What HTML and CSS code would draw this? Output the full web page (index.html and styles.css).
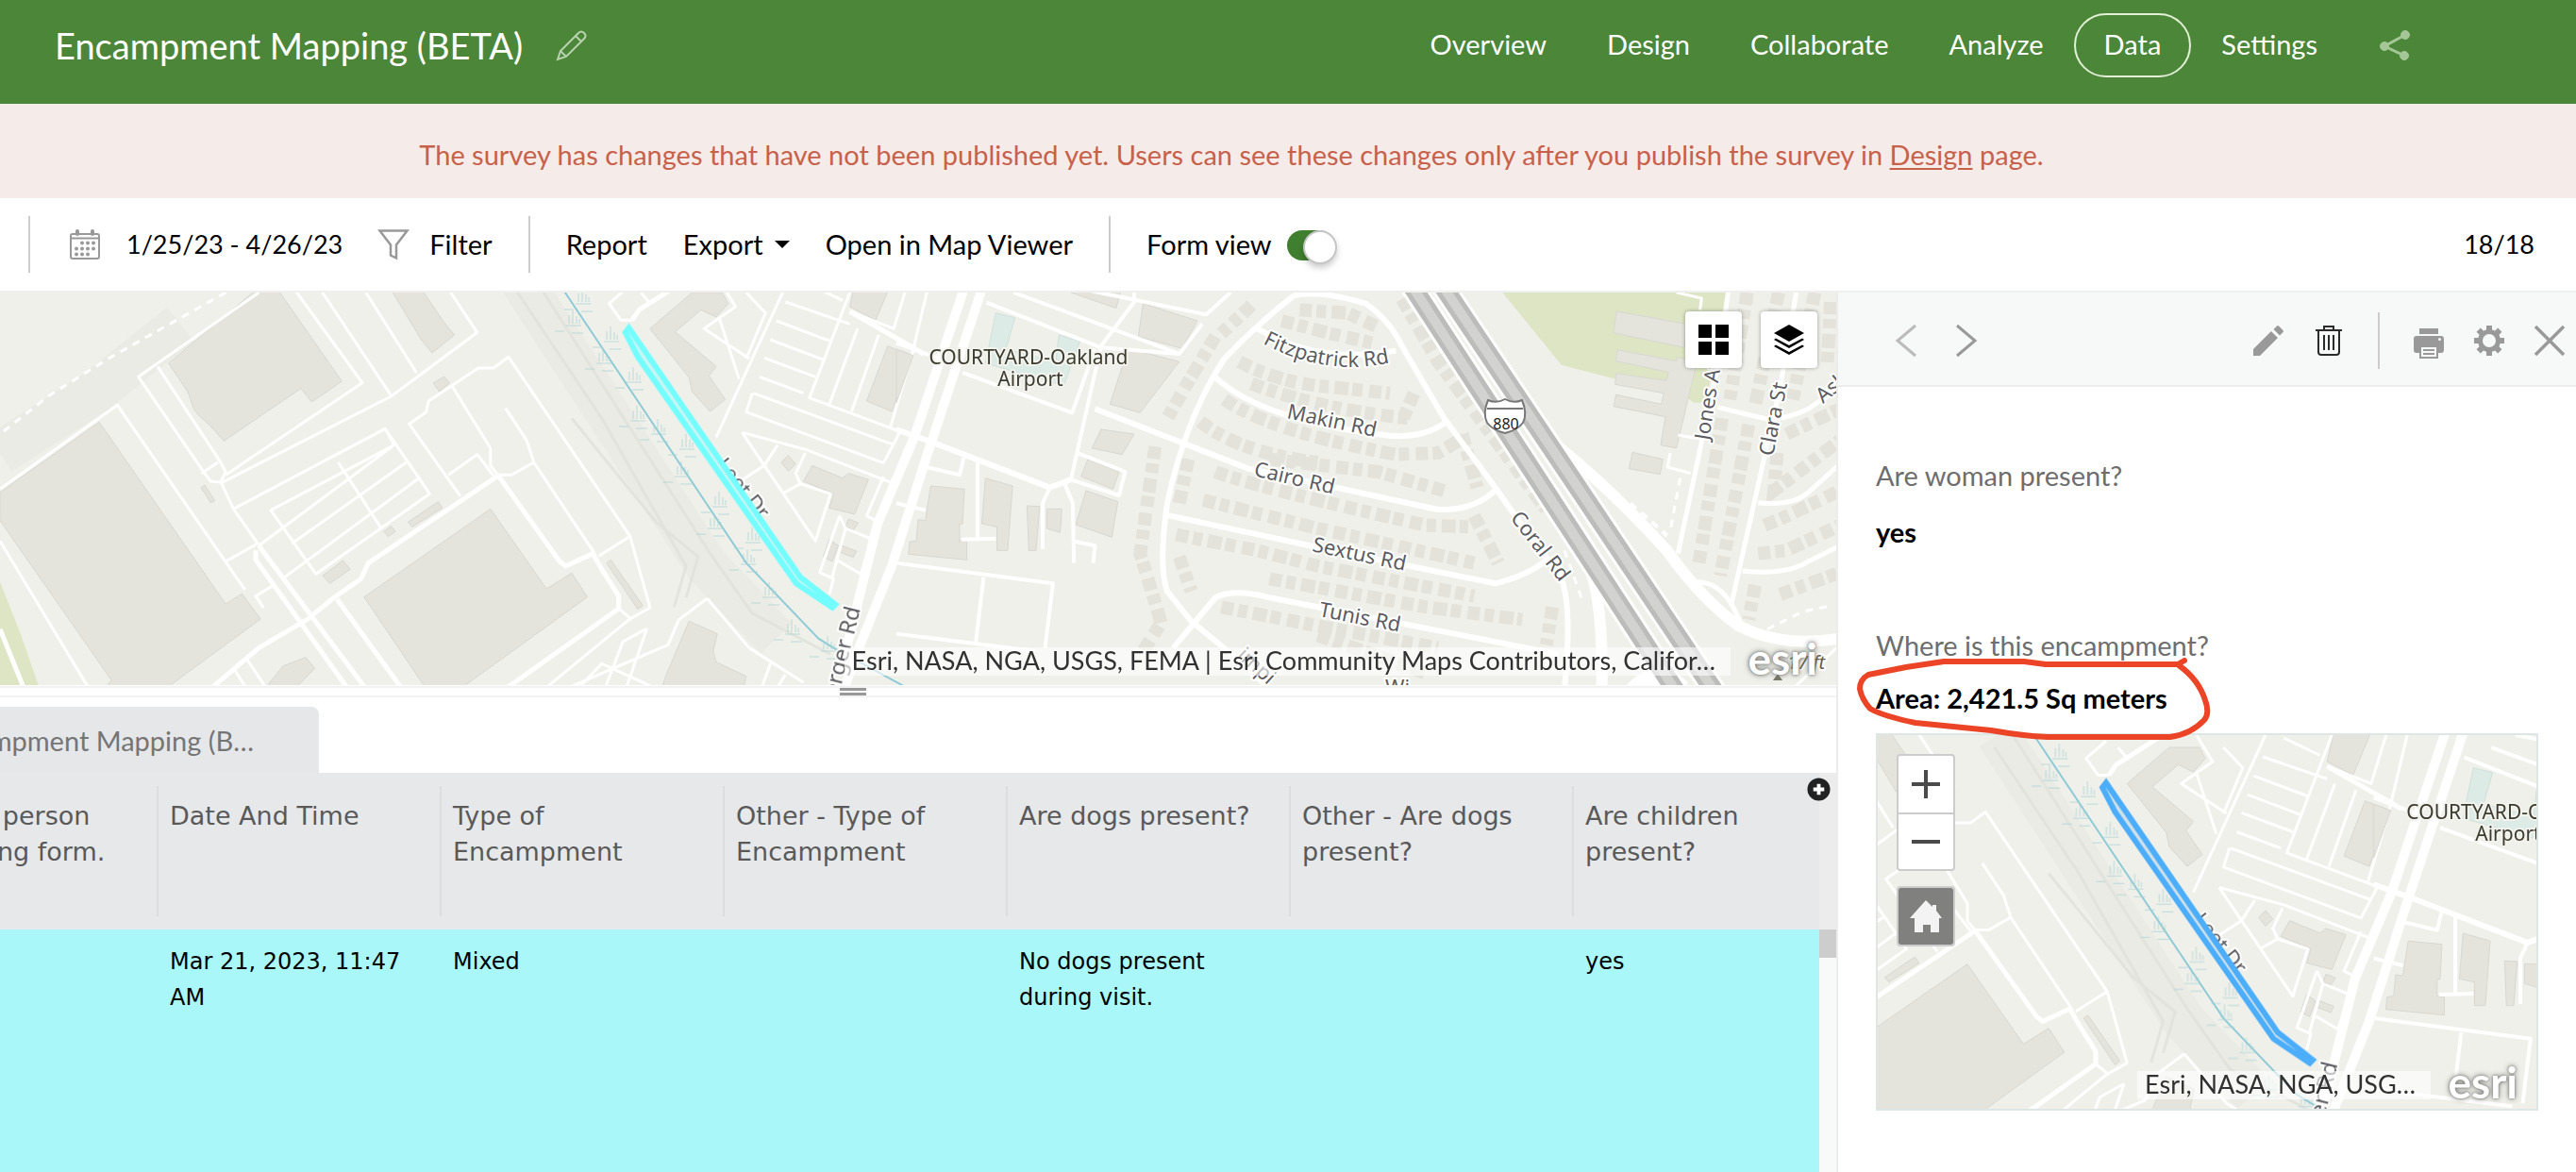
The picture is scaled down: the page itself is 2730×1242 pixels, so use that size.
FILE: index.html
```html
<!DOCTYPE html>
<html lang="en">
<head>
<meta charset="utf-8">
<title>Encampment Mapping (BETA)</title>
<link rel="stylesheet" href="styles.css">
</head>
<body>
<div class="app">
  <header class="header">
    <h1 class="title">Encampment Mapping (BETA)</h1>
    <button class="icon-btn" aria-label="Rename survey">
      <svg class="icon" viewBox="0 0 32 32" fill="none" stroke="#b9d3ae" stroke-width="2"><path d="M1 31l3-9L23 3q3-3 6 0t0 6L10 28zM4 22l6 6M20 6l6 6"/></svg>
    </button>
    <nav class="nav">
      <a href="#">Overview</a>
      <a href="#">Design</a>
      <a href="#">Collaborate</a>
      <a href="#">Analyze</a>
      <a href="#" class="active">Data</a>
      <a href="#">Settings</a>
    </nav>
    <button class="icon-btn" aria-label="Share">
      <svg class="icon" viewBox="0 0 32 32" fill="#a5c797" stroke="#a5c797"><path d="M27 5L5 17l21 10" fill="none" stroke-width="3"/><circle cx="27" cy="5" r="4.500"/><circle cx="5" cy="17" r="4.500"/><circle cx="26" cy="27" r="4.500"/></svg>
    </button>
  </header>

  <p class="banner">The survey has changes that have not been published yet. Users can see these changes only after you publish the survey in&nbsp;<a href="#">Design</a>&nbsp;page.</p>

  <div class="toolbar">
    <span class="rule"></span>
    <button class="tool date">
      <svg class="icon" viewBox="0 0 32 32" fill="none" stroke="#999" stroke-width="2"><rect x="1" y="5" width="30" height="26" rx="2"/><path d="M1 9.500h30"/><path d="M8 2v3M24 2v3" stroke-width="4" stroke-linecap="round"/><path d="M13 14.500h.01M19 14.500h.01M25 14.500h.01M7 20.500h.01M13 20.500h.01M19 20.500h.01M25 20.500h.01M7 26.500h.01M13 26.500h.01M19 26.500h.01" stroke-width="4" stroke-linecap="round"/></svg>
      1/25/23 - 4/26/23
    </button>
    <button class="tool filter">
      <svg class="icon" viewBox="0 0 32 32" fill="none" stroke="#999" stroke-width="2.500"><path d="M1.500 1.500h29L19 16.500V30.500l-6-3V16.500z"/></svg>
      Filter
    </button>
    <span class="rule"></span>
    <button class="tool">Report</button>
    <button class="tool export">Export <svg class="caret" viewBox="0 0 16 8"><path d="M0 0h16L8 8z"/></svg></button>
    <button class="tool">Open in Map Viewer</button>
    <span class="rule"></span>
    <label class="switch">Form view <input type="checkbox" checked></label>
    <span class="count">18/18</span>
  </div>

  <div class="content">
    <main class="main">
      <section class="map">
        <svg class="map-svg" viewBox="0 310 1946 416" preserveAspectRatio="xMinYMin slice">
          <defs>
            <g id="tuft"><path d="M0 0h16M3 -2v-9M7 -2v-14M11 -2v-8M14 -2v-5M-12 6h10M6 8h12"/></g>
            <g id="base">
              <rect x="0" y="290" width="1946" height="440" fill="#f0f0ea"/>
              <g transform="translate(0 300) scale(.6378 .3333)">
                <path class="shade" d="M865 -10L1175 900L1290 1130"/>
                <path class="shade" d="M0 540L160 345L300 130"/>
                <path class="contour" d="M890 -10L1180 860L1250 1050L1380 1180M860 30L1000 430L1140 900L1120 1030M950 430L1090 760L1160 870L1140 1000"/>
                <path class="green" d="M0 950L35 1120L66 1290H0z"/>
                <path class="bld" d="M445 -10H465V30L568 312L518 378L500 335L372 502L350 455L330 420L322 400L312 345L280 255zM640 -10L690 -10L738 125L755 165L718 222L700 180zM165 442L375 1020L402 988L433 1068L275 1290H175L185 1262L0 755V665zM815 718L908 972L950 922L976 998L765 1290H708L605 998zM1150 30H1200L1210 65L1190 108L1165 85L1122 155L1190 265L1178 295L1205 370L1180 408L1150 345L1145 300L1080 145zM1422 -10H1483L1455 118L1412 75zM1475 200L1515 230L1482 408L1440 375zM1350 580L1400 620L1410 605L1443 625L1420 735L1378 715L1385 670L1335 630zM1145 1075L1192 1115L1185 1170L1190 1205L1240 1250L1235 1290H1100L1105 1255zM508 1190L523 1225L490 1290H440L470 1218zM570 882L582 910L548 955L536 930zM728 695L735 715L685 775L678 760zM340 642L357 692L350 698L334 650zM650 772L657 790L645 806L638 790zM738 297L747 318L730 345L720 318zM1015 880L1068 1025L1060 1038L1008 890zM1310 548L1322 575L1310 598L1298 570zM1378 815L1393 835L1383 885L1368 870zM1397 833L1423 852L1418 872L1395 855zM1410 750L1426 762L1418 785L1405 775z"/>
                <path class="r4" d="M430 30L230 298L340 605L350 630L367 633L375 600L365 565L262 265M335 605L362 570M478 -10L602 317L375 610M522 -10L650 358M595 -10L692 285M735 -10L793 157L650 360L370 633M0 655L195 388L407 975M367 633L388 718L428 828L375 885M640 463L714 670L525 925L450 722L655 515M388 718L640 463L655 515M562 570L632 775M675 570L485 828M695 622L473 935M655 515L430 835M455 960L425 995L438 1032M828 612L815 580V525L752 330M828 610H850L887 570L875 500L840 398M887 570L990 865M765 678L680 448L708 410L712 375L795 270H820L845 235L1047 805L995 868M745 610L793 545L820 612M1047 805L1080 1032L1045 1070L905 1290M1028 1035L1050 1070M410 1195L443 1290M390 1230L410 1290M1175 1003L1128 1070L1110 1150L940 1290M1175 1003L1245 1160L1335 1270M1280 1210L1265 1290M1305 1245L1290 1290M1075 1098L1035 1140L1005 1290M1075 1098L1040 1290M960 1290L1000 1210L1080 1280M0 820L148 1290"/>
                <path class="r4" d="M1045 10L1012 65L1032 118H1050M1065 30L1078 60M1195 -10L1222 75L1170 145L1245 240M1195 110L1228 305M1240 30L1272 95L1240 240M1310 -10L1190 490M1250 350L1240 410L1468 572L1495 475M1252 350L1482 512M1262 298L1335 350M1270 238L1355 298M1280 180L1370 245M1290 120L1380 185M1305 60L1412 130M1340 0L1400 55M1420 -10L1345 365L1535 500M1425 145L1378 385M1460 165L1415 408M1412 90L1485 145L1510 -10M1545 -10L1515 230L1480 455M1233 475L1340 530L1482 635M1233 475L1355 820L1380 670L1330 638L1322 605L1338 540M1292 515L1270 580L1230 630M1330 638L1300 670M1468 615L1440 740L1460 760M1395 740L1362 920L1385 940L1378 990M1395 740L1405 780L1450 815L1430 925L1390 880M1405 780L1382 940"/>
                <path class="r6" d="M350 1290L430 1160L510 1070L555 1000L600 940L612 890L828 612L930 885L940 900L985 860L1000 910L1028 995V1035L840 1290M425 850V880L578 1290M430 835L608 1290M560 1005L668 1290M1050 118L1062 85L1140 -10M1412 90L1535 225M0 1100L40 1290"/>
                <path class="dash" d="M375 30L180 240L80 360L0 480"/>
                <path class="creek" d="M925 -10L1240 890L1360 1130L1385 1160L1510 1290"/>
              </g>
              <g class="marsh">
                <use href="#tuft" x="600" y="345"/><use href="#tuft" x="640" y="362"/><use href="#tuft" x="632" y="385"/><use href="#tuft" x="664" y="405"/><use href="#tuft" x="668" y="446"/><use href="#tuft" x="690" y="460"/><use href="#tuft" x="720" y="476"/><use href="#tuft" x="715" y="505"/><use href="#tuft" x="755" y="537"/><use href="#tuft" x="750" y="560"/><use href="#tuft" x="790" y="575"/><use href="#tuft" x="785" y="598"/><use href="#tuft" x="808" y="633"/><use href="#tuft" x="832" y="672"/><use href="#tuft" x="870" y="690"/><use href="#tuft" x="610" y="322"/>
              </g>
              <g transform="translate(950 300) scale(.6378 .3333)">
                <path class="green" d="M990 -10L1105 260L1195 305L1280 315L1325 380H1345L1385 -10z"/>
                <path class="bld" d="M410 65L500 120L475 208L402 170zM385 208L470 250L405 412L355 385zM340 465L395 480L375 545L325 525zM318 560L370 600L360 655L307 615zM315 660L368 695L358 808L298 768zM148 620L193 645L185 850H167V775L142 765zM217 708L238 710L232 850H220zM250 718H275L272 793L250 780zM57 645L113 655L110 765L105 767V820L117 822V880L20 862L22 822L33 820L36 752L48 755zM280 -10H378L365 80L290 30zM0 210L28 230L0 380z"/>
                <path class="pool" d="M165 95L197 110L182 210L265 250L270 165L305 185L278 325L148 255z"/>
                <path class="houses" d="M670 85L750 95L800 140M640 120L720 160L790 190M570 250Q640 320 720 330L820 350M590 320Q700 400 850 430M545 370Q620 470 830 545L900 540L935 500M505 440Q570 540 700 570M620 560L800 600L910 660M485 560L470 700M530 600Q600 650 880 770L950 775M510 690L700 780L960 890M465 800L600 850L700 900L960 995M470 870L490 980M620 940L880 1030L1040 1070M540 1030L700 1090L900 1160M530 170L480 330L450 430M430 520L405 860L440 1080L410 1170M590 70L540 160M840 50L900 250L1080 720M940 480L965 650M960 740L1000 890M860 350L840 440M700 1120L880 1240M1090 1030L1080 1150"/>
                <path class="r5" d="M150 62L340 205L470 225L508 130M195 30L470 225M395 -10L395 60L340 200L290 625M235 -10L515 100L555 30M110 285L292 412L330 210M50 585L105 610L112 555M255 650L243 700V845M280 640L293 700L295 890M293 820L330 835L327 890M135 570V815M108 815L165 812M300 540L380 600L370 675L290 625M0 890L260 955L247 1160M145 935L132 1140M0 1115L230 1170M0 190L70 240M0 700L48 722"/>
                <path class="r7" d="M0 465L65 510L255 650L290 625M330 400L585 590L900 720Q960 725 997 655M660 40Q600 130 545 240Q480 430 450 700Q435 900 450 980L490 1075L570 1200L620 1290M660 40Q700 20 780 65Q820 120 840 200L910 430L997 655Q1060 830 1100 920Q1125 1000 1110 1290M530 300Q610 440 820 485Q880 495 918 435M600 145Q700 260 830 215M450 738L700 840L995 955Q1050 930 1080 880M460 1160L530 1000Q560 970 620 1000L1100 1180"/>
                <path class="r12" d="M1030 540Q1130 800 1155 920Q1175 1050 1172 1290M1100 520Q1190 660 1280 850Q1340 1010 1400 1090Q1470 1160 1568 1130"/>
                <path class="r20" d="M1220 1330Q1260 1220 1300 1300"/>
                <path class="dash" d="M1110 850L1140 1010M1220 700L1280 805"/>
                <path class="hwy-case" d="M850 -10L1296 1300M901 -10L1360 1300"/>
                <path class="hwy" d="M850 -10L1296 1300M901 -10L1360 1300"/>
                <path class="hwy-mid" d="M850 -10L1296 1300M901 -10L1360 1300"/>
              </g>
              <g transform="translate(1640 300) scale(.3333)">
                <path class="bld" d="M220 90L440 130L435 205L210 158zM222 212L410 248L412 235L475 250L410 525L360 515L375 425L210 392L218 355L362 385L370 350L215 322L218 287L378 310L385 283L218 248zM270 538L367 560L358 608L260 590z"/>
                <path class="houses" d="M555 430L480 900M640 450L550 930M635 30L580 370M735 30L660 390M850 30L780 370M900 60L890 260M760 480L930 400M730 540L720 660L930 500M690 770L740 750L930 660M670 860L760 850L930 770M660 960L640 1070M740 990L820 960L930 920"/>
                <path class="r6" d="M580 -10L540 270L415 860M798 -10L740 330L585 1020M540 395L710 435Q780 425 830 400L930 330M670 698Q780 710 830 665L930 575M620 915Q760 930 830 885L930 835M458 952Q540 940 590 1030L625 1100"/>
                <path class="r4" d="M410 30L490 48L485 85M415 483L485 495M390 540L382 585L455 605M780 1290L930 1150"/>
                <path class="dash" d="M422 620L390 790M265 700L380 800M655 1110L700 1100L810 1045L905 1025"/>
              </g>
              <path class="r9" d="M1027 290L969 463L930 555L890 715M1046 290L980 490L945 600L905 700L893 735"/>
              <g class="lbl">
                <text class="poi" x="1090" y="386">COURTYARD-Oakland</text>
                <text class="poi" x="1092" y="409">Airport</text>
                <text transform="translate(758 493) rotate(51)">Leet Dr</text>
                <text class="big" text-anchor="end" transform="translate(912 645) rotate(-76)">Hegenberger Rd</text>
              </g>
            </g>
            <path id="area" d="M1045 142L1330 935L1388 1022L1383 1032L1323 955L1060 235L1039 157z" transform="translate(0 300) scale(.6378 .3333)"/>
          </defs>
          <use href="#base"/>
          <path id="fitz" d="M1338 364Q1410 402 1482 382" fill="none"/>
          <g class="lbl">
            <text><textPath href="#fitz">Fitzpatrick Rd</textPath></text>
            <text transform="translate(1363 443) rotate(12)">Makin Rd</text>
            <text transform="translate(1328 504) rotate(13)">Cairo Rd</text>
            <text transform="translate(1390 584) rotate(12)">Sextus Rd</text>
            <text transform="translate(1397 653) rotate(11)">Tunis Rd</text>
            <text transform="translate(1600 549) rotate(52)">Coral Rd</text>
            <text transform="translate(1811 467) rotate(-81)">Jones Av</text>
            <text transform="translate(1879 484) rotate(-79)">Clara St</text>
            <text transform="translate(1932 428) rotate(-40)">Ash</text>
            <text transform="translate(1310 696) rotate(42)">impi</text>
            <text x="1468" y="736">Wi</text>
            <text class="elev" x="1894" y="709">17 ft</text>
          </g>
          <path d="M1884 714l5 7h-10z" fill="#776"/>
          <path d="M1577 424q9 4 18-1q9 5 18 1q6 14 1 24q-6 8-19 11q-13-3-19-11q-5-10 1-24z" fill="#fff" stroke="#777" stroke-width="2"/>
          <path d="M1576 433h38" stroke="#777" stroke-width="2"/>
          <text class="shield" x="1596" y="455">880</text>
          <use href="#area" class="area-main"/>
        </svg>
        <div class="map-tools">
          <button aria-label="Basemap gallery"><svg class="icon" viewBox="0 0 32 32"><path d="M0 0h14v14H0zM18 0h14v14H18zM0 18h14v14H0zM18 18h14v14H18z"/></svg></button>
          <button aria-label="Layers"><svg class="icon" viewBox="0 0 32 32"><path d="M16 0l16 9-16 9L0 9zM2 14.500l14 7.500 14-7.500 2 1.500-16 9L0 16zM2 21.500L16 29l14-7.500 2 1.500-16 9L0 23z"/></svg></button>
        </div>
        <div class="attribution">Esri, NASA, NGA, USGS, FEMA | Esri Community Maps Contributors, Califor…</div>
        <span class="esri">esri</span>
      </section>

      <div class="splitter"><span></span></div>

      <div class="tabs"><button class="tab">Encampment Mapping (B…</button></div>

      <section class="grid">
        <div class="grid-view">
          <table>
            <thead>
              <tr>
                <th><div>Name of person completing form.</div></th>
                <th><div>Date And Time</div></th>
                <th><div>Type of Encampment</div></th>
                <th><div>Other - Type of Encampment</div></th>
                <th><div>Are dogs present?</div></th>
                <th><div>Other - Are dogs present?</div></th>
                <th><div>Are children present?</div></th>
              </tr>
            </thead>
            <tbody>
              <tr>
                <td></td>
                <td>Mar 21, 2023, 11:47 AM</td>
                <td>Mixed</td>
                <td></td>
                <td>No dogs present during visit.</td>
                <td></td>
                <td>yes</td>
              </tr>
            </tbody>
          </table>
        </div>
        <div class="scroll"><div class="scroll-head"></div><div class="thumb"></div></div>
        <button class="add-col" aria-label="Show or hide columns"><svg viewBox="0 0 26 26"><circle cx="13" cy="13" r="12.500" fill="#222"/><path d="M13 7v12M7 13h12" stroke="#fff" stroke-width="4"/></svg></button>
      </section>
    </main>

    <aside class="panel">
      <div class="panel-bar">
        <button class="icon-btn" aria-label="Previous"><svg class="icon" viewBox="0 0 32 32" fill="none" stroke="#bbb" stroke-width="3"><path d="M26 0L7 16l19 16"/></svg></button>
        <button class="icon-btn" aria-label="Next"><svg class="icon" viewBox="0 0 32 32" fill="none" stroke="#999" stroke-width="3"><path d="M6 0l19 16L6 32"/></svg></button>
        <button class="icon-btn push" aria-label="Edit"><svg class="icon" viewBox="0 0 32 32" fill="#999"><path d="M0 32v-7L19 6l7 7L7 32zM21.500 4L25 .5q1-1 2 0L31.500 5q1 1 0 2L28 10.500z"/></svg></button>
        <button class="icon-btn" aria-label="Delete"><svg class="icon" viewBox="0 0 32 32" fill="none" stroke="#2b2b2b" stroke-width="2"><path d="M2 5h28M11 4V1h10v3M5 5v23q0 3 3 3h16q3 0 3-3V5M11 10v16M16 10v16M21 10v16"/></svg></button>
        <span class="rule"></span>
        <button class="icon-btn" aria-label="Print"><svg class="icon print" viewBox="0 0 32 32" fill="#999"><path d="M6 0h20v6H6zM3 8h26q3 0 3 3v12q0 3-3 3h-3v6H6v-6H3q-3 0-3-3V11q0-3 3-3z"/><path d="M8 20h16v10H8z" fill="#f7f9f8"/><path d="M10 23h12M10 27h12" stroke="#999" stroke-width="2"/><circle cx="27.500" cy="11.500" r="1.500" fill="#f7f9f8"/></svg></button>
        <button class="icon-btn" aria-label="Configure"><svg class="icon" viewBox="0 0 32 32" fill="none" stroke="#999"><circle cx="16" cy="16" r="9.500" stroke-width="5"/><path d="M16 0v5M16 27v5M0 16h5M27 16h5M4.700 4.700l3.500 3.500M23.800 23.800l3.500 3.500M4.700 27.300l3.500-3.500M23.800 8.200l3.500-3.500" stroke-width="6"/></svg></button>
        <button class="icon-btn" aria-label="Close"><svg class="icon" viewBox="0 0 32 32" fill="none" stroke="#999" stroke-width="3.500"><path d="M1 1l30 30M31 1L1 31"/></svg></button>
      </div>
      <dl class="answers">
        <dt>Are woman present?</dt>
        <dd>yes</dd>
        <dt>Where is this encampment?</dt>
        <dd class="marked">Area: 2,421.5 Sq meters
          <svg class="scribble" viewBox="1960 690 390 100" fill="none" stroke="#eb4426" stroke-width="6" stroke-linecap="round" stroke-linejoin="round"><path d="M2315 699L2308 703H2168L2145 700H2060L2020 706L1980 714Q1971 719 1971 729Q1973 740 1982 750Q1996 758 2030 765L2110 773Q2145 779 2170 780H2300Q2322 777 2336 762Q2342 755 2337 741Q2330 719 2309 704"/></svg>
        </dd>
      </dl>
      <div class="mini-map">
        <svg class="map-svg" viewBox="425 297 697 396" preserveAspectRatio="xMinYMin slice">
          <use href="#base"/>
          <use href="#area" class="area-mini"/>
        </svg>
        <div class="mini-tools">
          <div class="zoom">
            <button aria-label="Zoom in"><svg class="icon" viewBox="0 0 32 32" stroke="#4a4a4a" stroke-width="4"><path d="M16 1v30M1 16h30"/></svg></button>
            <button aria-label="Zoom out"><svg class="icon" viewBox="0 0 32 32" stroke="#4a4a4a" stroke-width="4"><path d="M1 16h30"/></svg></button>
          </div>
          <button class="home" aria-label="Default extent"><svg viewBox="0 0 34 34" fill="#f3f3f3"><path d="M17 0l7 7V5h4v6l6 8h-3v15h-9v-8h-8v8H5V19H0z"/></svg></button>
        </div>
        <div class="attribution">Esri, NASA, NGA, USG…</div>
        <span class="esri">esri</span>
      </div>
    </aside>
  </div>
</div>
</body>
</html>
```
FILE: styles.css
```css
* { box-sizing: border-box; }

body {
  margin: 0;
  font-family: Lato, "Open Sans", sans-serif;
  font-size: 29px;
  line-height: 36px;
  color: #000;
  background: #fff;
}

h1, p, dl, dd { margin: 0; }

button {
  padding: 0;
  border: 0;
  background: none;
  font: inherit;
  color: inherit;
}

.icon { display: block; width: 32px; height: 32px; overflow: visible; }

.app {
  display: flex;
  flex-direction: column;
  height: 100vh;
  overflow: hidden;
}

/* Header */
.header {
  display: flex;
  flex: none;
  align-items: center;
  height: 110px;
  padding: 0 176px 14px 58px;
  background: #4b8639;
  color: #fff;
}
.title { margin-right: 36px; font-size: 38px; font-weight: 400; line-height: 48px; }
.nav { display: flex; margin: 0 34px 0 auto; }
.nav a {
  padding: 13px 30px 15px;
  border: 2px solid transparent;
  border-radius: 34px;
  color: #fff;
  line-height: 36px;
  text-decoration: none;
}
.nav .active { border-color: #e2f1d5; }

.banner {
  display: flex;
  flex: none;
  align-items: center;
  justify-content: center;
  height: 100px;
  padding: 8px 120px 0 0;
  background: #f5ebe9;
  color: #c8614a;
}
.banner a { color: inherit; text-underline-offset: 3px; }

/* Toolbar */
.toolbar {
  display: flex;
  flex: none;
  align-items: center;
  gap: 38px;
  height: 100px;
  padding: 0 44px 0 30px;
  border-bottom: 2px solid #efefef;
}
.rule { flex: none; width: 2px; height: 60px; background: #ccc; }
.tool { display: flex; align-items: center; white-space: nowrap; }
.date { gap: 28px; margin-left: 4px; font-size: 27px; }
.filter { gap: 22px; }
.export { gap: 12px; }
.caret { width: 16px; height: 8px; }
.switch { display: flex; align-items: center; gap: 16px; }
.switch input {
  position: relative;
  width: 50px;
  height: 32px;
  margin: 2px 0 0;
  border-radius: 16px;
  background: #3f7f2f;
  appearance: none;
}
.switch input::after {
  content: "";
  position: absolute;
  top: 0;
  right: -3px;
  width: 32px;
  height: 32px;
  border: 2px solid #c6c6c6;
  border-radius: 50%;
  background: #fff;
  box-shadow: 0 4px 6px rgba(0, 0, 0, .2);
}
.count { margin-left: auto; font-size: 27px; }

.content {
  display: grid;
  flex: 1;
  grid-template-columns: minmax(0, 1fr) 784px;
  min-height: 0;
}
.main { display: flex; flex-direction: column; min-height: 0; }

/* Map */
.map { position: relative; flex: none; height: 416px; overflow: hidden; }
.map-svg { display: block; width: 100%; height: 100%; }
.map-svg path { vector-effect: non-scaling-stroke; }
.shade { fill: none; stroke: #e9e9e3; stroke-width: 46; opacity: .6; }
.contour { fill: none; stroke: #e0e0da; stroke-width: 3; opacity: .7; }
.green { fill: #dde5c4; }
.pool { fill: #dcebe6; stroke: #cfe0da; }
.bld { fill: #e4e4dd; stroke: #d8d8d2; }
.houses { fill: none; stroke: #e3e3dc; stroke-width: 14; stroke-dasharray: 13 5 10 6 15 4 11 7; }
.r4, .r5, .r6, .r7, .r9, .r12, .r20 { fill: none; stroke: #fff; stroke-linejoin: round; }
.r4 { stroke-width: 3; }
.r5 { stroke-width: 4; }
.r6 { stroke-width: 5; }
.r7 { stroke-width: 6; }
.r9 { stroke-width: 10; }
.r12 { stroke-width: 12; }
.r20 { stroke-width: 28; }
.dash { fill: none; stroke: #fff; stroke-width: 3; stroke-dasharray: 8 7; }
.creek { fill: none; stroke: #8fcbd6; stroke-width: 2; }
.marsh { fill: none; stroke: #a9d3d6; stroke-width: 1; opacity: .8; }
.hwy-case { fill: none; stroke: #fff; stroke-width: 26; }
.hwy { fill: none; stroke: #bcbcbb; stroke-width: 20; }
.hwy-mid { fill: none; stroke: #d2d2d1; stroke-width: 10; }
.area-main { fill: #c9f5f3; stroke: #74fdff; stroke-width: 6; }
.area-mini { fill: #cfe0e8; stroke: #4caefb; stroke-width: 6; }
.lbl text {
  font-family: "Noto Sans", sans-serif;
  font-size: 22px;
  fill: #5c5c60;
  stroke: #fff;
  stroke-width: 4px;
  stroke-linejoin: round;
  paint-order: stroke;
}
.lbl .poi { font-size: 21px; fill: #3b3b30; stroke: #f3f3ee; text-anchor: middle; }
.lbl .big { font-size: 24px; }
.lbl .elev { font-size: 20px; font-style: italic; fill: #665c40; }
.shield { font-family: "Noto Sans", sans-serif; font-size: 16px; text-anchor: middle; fill: #222; }

.map-tools { position: absolute; top: 20px; right: 20px; display: flex; gap: 20px; }
.map-tools button {
  display: grid;
  place-items: center;
  width: 60px;
  height: 60px;
  border-radius: 4px;
  background: #fff;
  box-shadow: 0 0 4px rgba(0, 0, 0, .35);
}
.attribution {
  position: absolute;
  right: 112px;
  bottom: 10px;
  padding: 0 16px 2px 8px;
  background: rgba(255, 255, 255, .6);
  font-size: 27px;
  line-height: 28px;
  color: #323232;
  white-space: nowrap;
}
.esri {
  position: absolute;
  right: 20px;
  bottom: 4px;
  font-size: 46px;
  font-weight: 700;
  line-height: 48px;
  color: #fff;
  text-shadow: 0 0 3px #777, 0 0 6px #777;
}

.splitter {
  display: grid;
  flex: none;
  place-items: center;
  height: 12px;
  margin-top: 1px;
  border: solid #f2f2f2;
  border-width: 2px 0;
}
.splitter span {
  width: 28px;
  height: 8px;
  margin-right: 138px;
  border: solid #999;
  border-width: 3px 0;
}

/* Data grid */
.tabs { flex: none; padding-top: 10px; }
.tab {
  display: flex;
  align-items: center;
  justify-content: flex-end;
  width: 338px;
  height: 70px;
  padding: 2px 69px 0 0;
  overflow: hidden;
  border-radius: 0 8px 0 0;
  background: #e6e7e9;
  color: #757575;
  white-space: nowrap;
}
.grid {
  position: relative;
  display: flex;
  flex: 1;
  min-height: 0;
  font-family: "DejaVu Sans", Verdana, sans-serif;
}
.grid-view { flex: 1; overflow: hidden; background: #aaf7f9; }
table {
  width: 2100px;
  margin-left: -132px;
  border-collapse: collapse;
  table-layout: fixed;
}
th {
  height: 166px;
  padding: 14px 0;
  background: #e6e8ea;
  text-align: left;
}
th div {
  height: 138px;
  padding: 13px 12px;
  border-right: 2px solid #dcddde;
  font-size: 27px;
  font-weight: 400;
  line-height: 38px;
  color: #595959;
}
td { padding: 15px 20px 14px 12px; font-size: 24px; line-height: 38px; vertical-align: top; }
.scroll { flex: none; width: 18px; background: #f8faf9; }
.scroll-head { height: 166px; background: #ececec; }
.thumb { height: 30px; background: #cdcdcd; }
.add-col { position: absolute; top: 5px; right: 6px; width: 25px; height: 25px; }
.add-col svg { display: block; }

/* Record panel */
.panel { border-left: 2px solid #ececec; overflow: hidden; }
.panel-bar {
  display: flex;
  align-items: center;
  gap: 32px;
  height: 100px;
  padding: 4px 12px 0 56px;
  border-bottom: 2px solid #ececec;
  background: #f7f9f8;
}
.push { margin-left: auto; }
.panel-bar .rule { margin: 0 4px; }
.print { margin-top: 6px; }

.answers { padding: 76px 40px 0; }
dt { color: #6e6e6e; }
dd { margin: 24px 0 84px; font-weight: 700; }
.marked { position: relative; z-index: 1; margin: 20px 0 19px; }
.scribble { position: absolute; top: -31px; left: -28px; width: 390px; height: 100px; }

.mini-map {
  position: relative;
  height: 400px;
  margin: 0 40px;
  border: 2px solid #dfe6e6;
  overflow: hidden;
}
.mini-tools { position: absolute; top: 20px; left: 20px; }
.zoom, .home { width: 62px; border: 2px solid #ccc; border-radius: 4px; }
.zoom { height: 124px; margin-bottom: 16px; background: #fff; }
.zoom button, .home { display: grid; place-items: center; width: 100%; height: 60px; }
.zoom button + button { border-top: 2px solid #ccc; }
.home { width: 62px; height: 64px; background: #80807e; background-clip: padding-box; }
.home svg { width: 34px; height: 34px; }
```
